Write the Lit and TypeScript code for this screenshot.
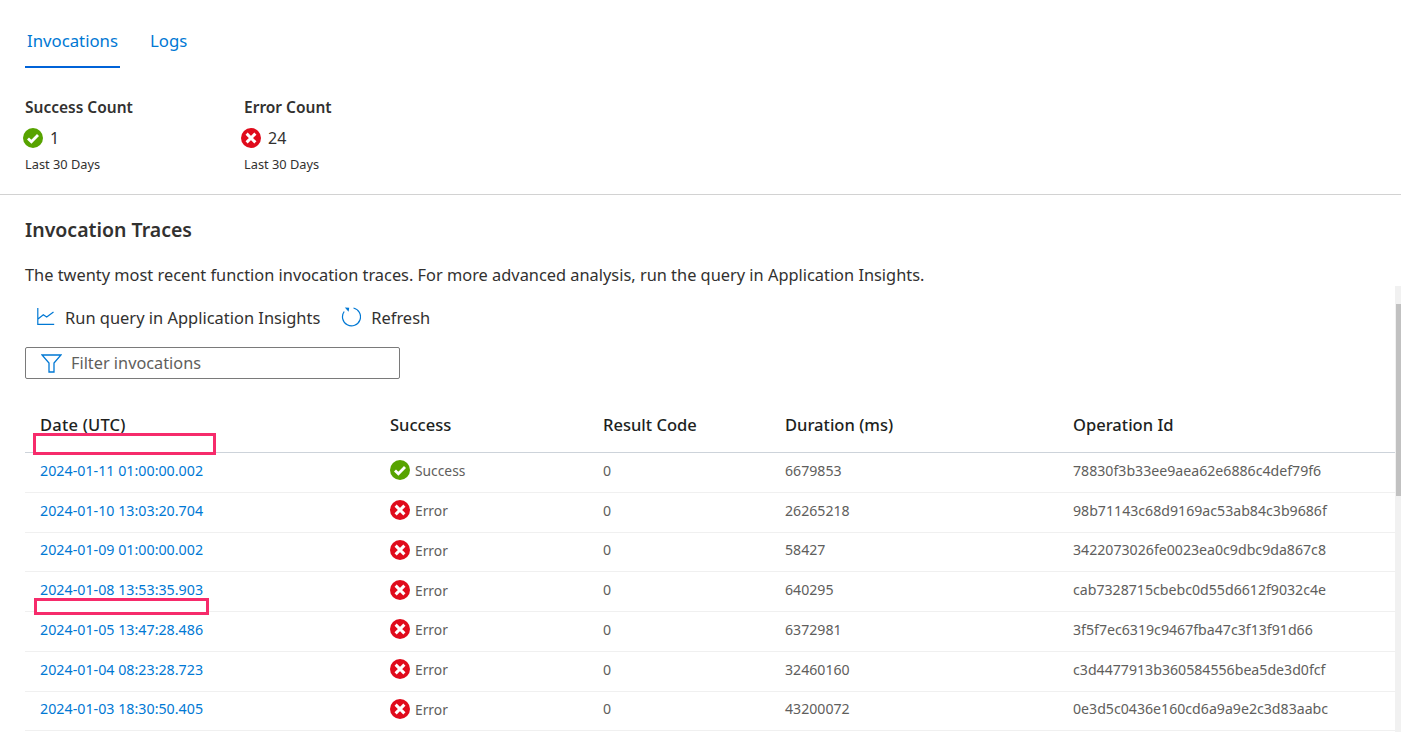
import { LitElement, html, css } from "lit";
import { customElement } from "lit/decorators.js";

const rows = [
  ["2024-01-11 01:00:00.002", true, "0", "6679853", "78830f3b33ee9aea62e6886c4def79f6"],
  ["2024-01-10 13:03:20.704", false, "0", "26265218", "98b71143c68d9169ac53ab84c3b9686f"],
  ["2024-01-09 01:00:00.002", false, "0", "58427", "3422073026fe0023ea0c9dbc9da867c8"],
  ["2024-01-08 13:53:35.903", false, "0", "640295", "cab7328715cbebc0d55d6612f9032c4e"],
  ["2024-01-05 13:47:28.486", false, "0", "6372981", "3f5f7ec6319c9467fba47c3f13f91d66"],
  ["2024-01-04 08:23:28.723", false, "0", "32460160", "c3d4477913b360584556bea5de3d0fcf"],
  ["2024-01-03 18:30:50.405", false, "0", "43200072", "0e3d5c0436e160cd6a9a9e2c3d83aabc"],
] as const;

const okIcon = html`<svg class="status" viewBox="0 0 20 20"><circle cx="10" cy="10" r="10" fill="#57a300"/><path d="M5 10.4l3.4 3.4 6.6-6.8" fill="none" stroke="#fff" stroke-width="2.8"/></svg>`;
const errIcon = html`<svg class="status" viewBox="0 0 20 20"><circle cx="10" cy="10" r="10" fill="#e00b1c"/><path d="M5.6 5.6l8.8 8.8M14.4 5.6l-8.8 8.8" fill="none" stroke="#fff" stroke-width="3"/></svg>`;

@customElement("app-root")
export class AppRoot extends LitElement {
  static styles = css`
    :host {
      display: block;
      position: relative;
      height: 732px;
      overflow: hidden;
      background: #fff;
      color: #323130;
      font-family: "Noto Sans", "Open Sans", sans-serif;
      font-size: 14px;
    }
    .tabs {
      display: flex;
      gap: 28px;
      margin-left: 25px;
      padding-top: 29px;
      height: 39px;
    }
    .tab {
      height: 39px;
      box-sizing: border-box;
      padding: 0 2px;
      color: #0078d4;
      font-size: 16.75px;
      line-height: 24px;
    }
    .tab.active {
      border-bottom: 2px solid #0063d8;
    }
    .stats {
      display: flex;
      padding: 29px 0 0 25px;
      height: 97px;
      border-bottom: 1px solid #d2d2d2;
    }
    .stat { width: 219px; }
    .stat-title {
      font-weight: 600;
      font-size: 15.5px;
      line-height: 21px;
    }
    .stat-value {
      display: flex;
      align-items: center;
      gap: 7px;
      margin: 10px 0 0 -2px;
      height: 20px;
      font-size: 16px;
    }
    .stat.err .stat-value { margin-left: -3px; }
    .stat-note {
      font-size: 12.8px;
      line-height: 16px;
      margin-top: 8px;
    }
    .status { width: 20px; height: 20px; flex: none; display: block; }
    h2 {
      margin: 22px 0 0 25px;
      font-size: 19.5px;
      line-height: 26px;
      font-weight: 600;
    }
    .desc {
      margin: 20px 0 0 25px;
      font-size: 16.37px;
      line-height: 24px;
    }
    .toolbar {
      display: flex;
      align-items: center;
      margin: 18px 0 0 36px;
      height: 24px;
      font-size: 16.45px;
    }
    .cmd { display: flex; align-items: center; }
    .cmd svg { display: block; flex: none; }
    .cmd1 { gap: 10px; margin-right: 21px; }
    .cmd2 { gap: 10px; }
    .filter {
      display: flex;
      align-items: center;
      gap: 9px;
      box-sizing: border-box;
      width: 375px;
      height: 32px;
      margin: 18px 0 0 25px;
      padding-left: 15px;
      border: 1px solid #7a7a7a;
      border-radius: 2px;
      color: #605e5c;
      font-size: 16.3px;
    }
    .grid { margin: 27px 6px 0 25px; }
    .row {
      display: grid;
      grid-template-columns: 350px 213px 182px 288px 1fr;
      padding: 0 0 4px 15px;
      align-items: center;
      box-sizing: border-box;
      border-bottom: 1px solid #f0f0f0;
      height: 39.75px;
      color: #605e5c;
      font-size: 14.15px;
    }
    .row.head {
      height: 47px;
      border-bottom: 1px solid #cdd3da;
      padding-bottom: 9px;
      color: #201f1e;
      font-size: 16.55px;
      font-weight: 500;
    }
    .head-date { letter-spacing: 0.2px; }
    a { color: #0078d4; text-decoration: none; font-size: 14.28px; }
    .cell-status { display: flex; align-items: center; gap: 5px; font-size: 13.8px; }
    .cell-status span { padding-top: 1px; }
    .scroll {
      position: absolute;
      top: 286px;
      right: 0;
      bottom: 0;
      width: 6px;
      background: #f1f1f1;
    }
    .thumb {
      position: absolute;
      top: 18px;
      left: 1px;
      width: 5px;
      height: 192px;
      background: #c1c1c1;
    }
    .mark {
      position: absolute;
      box-sizing: border-box;
      border: 3px solid #f62b6b;
      background: #fff;
    }
    .m1 { left: 33px; top: 433px; width: 183px; height: 22px; }
    .m2 { left: 34px; top: 598px; width: 175px; height: 17px; }
  `;

  render() {
    return html`
      <div class="tabs">
        <div class="tab active">Invocations</div>
        <div class="tab">Logs</div>
      </div>
      <div class="stats">
        <div class="stat">
          <div class="stat-title">Success Count</div>
          <div class="stat-value">${okIcon}<span>1</span></div>
          <div class="stat-note">Last 30 Days</div>
        </div>
        <div class="stat err">
          <div class="stat-title">Error Count</div>
          <div class="stat-value">${errIcon}<span>24</span></div>
          <div class="stat-note">Last 30 Days</div>
        </div>
      </div>
      <h2>Invocation Traces</h2>
      <div class="desc">The twenty most recent function invocation traces. For more advanced analysis, run the query in Application Insights.</div>
      <div class="toolbar">
        <div class="cmd cmd1">
          <svg width="19" height="24" viewBox="0 0 19 24" fill="none" stroke="#0078d4" stroke-width="1.2">
            <path d="M1.8 3v16.3H18.2M2 14l5.3-4.3 3.4 2.3 6.8-5"/>
          </svg>
          <span>Run query in Application Insights</span>
        </div>
        <div class="cmd cmd2">
          <svg width="20" height="24" viewBox="0 0 20 24" fill="none" stroke="#0078d4" stroke-width="1.2">
            <path d="M12.5 3A9 9 0 1 1 3.2 6.5"/>
            <path d="M3.8 2.6L8.2 2.8 7.6 6.8z" fill="#0078d4" stroke="none"/>
          </svg>
          <span>Refresh</span>
        </div>
      </div>
      <div class="filter">
        <svg width="21" height="19" viewBox="0 0 21 19" fill="none" stroke="#0078d4" stroke-width="1.3">
          <path d="M1 1h19l-7 8v9H8V9z"/>
        </svg>
        <span>Filter invocations</span>
      </div>
      <div class="grid">
        <div class="row head">
          <div class="head-date">Date (UTC)</div><div>Success</div><div>Result Code</div><div>Duration (ms)</div><div>Operation Id</div>
        </div>
        ${rows.map(
          (r) => html`<div class="row">
            <div><a>${r[0]}</a></div>
            <div class="cell-status">${r[1] ? okIcon : errIcon}<span>${r[1] ? "Success" : "Error"}</span></div>
            <div>${r[2]}</div>
            <div>${r[3]}</div>
            <div>${r[4]}</div>
          </div>`
        )}
      </div>
      <div class="scroll"><div class="thumb"></div></div>
      <div class="mark m1"></div>
      <div class="mark m2"></div>
    `;
  }
}
